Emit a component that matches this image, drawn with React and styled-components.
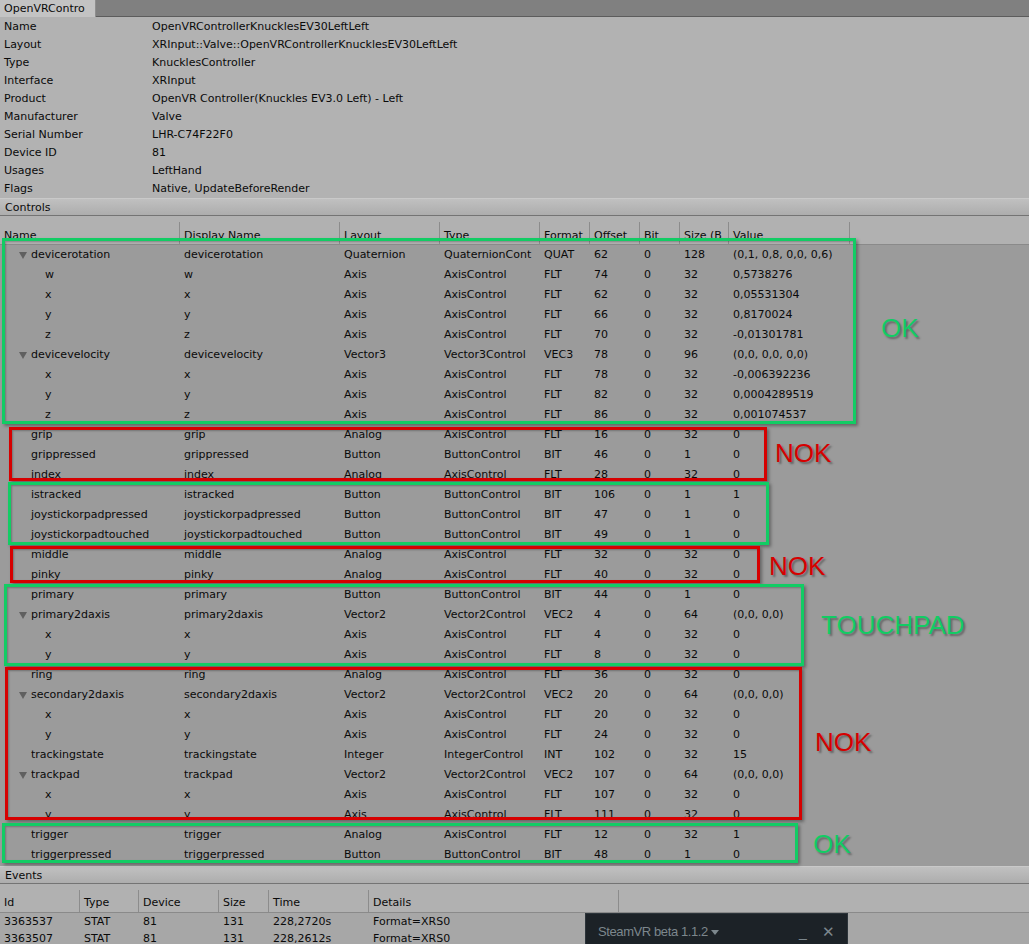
import React from 'react'
import styled, { createGlobalStyle } from 'styled-components'

const Global = createGlobalStyle`
    html, body {
        margin: 0;
        padding: 0;
        background: #9b9b9b;
    }
    body {
        font-family: "DejaVu Sans", Verdana, sans-serif;
        font-size: 11px;
        color: #0a0a0a;
    }
`

const Page = styled.div`
    position: relative;
    width: 1029px;
    height: 944px;
    overflow: hidden;
    background: #9b9b9b;
`

const TabBar = styled.div`
    height: 16px;
    background: #808080;
    border-bottom: 1px solid #5c5c5c;
    display: flex;
`

const Tab = styled.div`
    width: 91px;
    padding-left: 4px;
    background: #c3c3c3;
    border-right: 1px solid #8e8e8e;
    line-height: 18px;
    height: 17px;
    white-space: nowrap;
    overflow: hidden;
`

const Info = styled.div`
    background: #b2b2b2;
    padding-top: 1px;
`

const InfoRow = styled.div`
    display: grid;
    grid-template-columns: 148px 1fr;
    height: 18px;
    line-height: 18px;
    padding-left: 4px;
    white-space: nowrap;
`

const Foldout = styled.div`
    height: 16px;
    line-height: 17px;
    padding-left: 5px;
    background: linear-gradient(#c0c0c0, #adadad);
    border-top: 1px solid #c9c9c9;
    border-bottom: 1px solid #747474;
    margin-top: ${p => p.$gap || 0}px;
`

const Table = styled.div`
    width: ${p => p.$width}px;
`

const HeadRow = styled.div`
    display: grid;
    grid-template-columns: ${p => p.$cols};
    height: ${p => p.$height}px;
    background: #b1b1b1;
    border-bottom: 1px solid #8a8a8a;
    width: 1029px;
`

const HeadCell = styled.div`
    position: relative;
    display: flex;
    align-items: flex-end;
    padding: 0 0 ${p => p.$pad}px 4px;
    white-space: nowrap;
    overflow: hidden;
    &::after {
        content: '';
        position: absolute;
        right: 0;
        top: 6px;
        bottom: 0;
        width: 1px;
        background: #8c8c8c;
    }
`

const Row = styled.div`
    display: grid;
    grid-template-columns: ${p => p.$cols};
    height: ${p => p.$height}px;
    line-height: ${p => p.$height}px;
    background: ${p => p.$bg || 'transparent'};
`

const Cell = styled.div`
    padding-left: 4px;
    white-space: nowrap;
    overflow: hidden;
`

const NameCell = styled.div`
    display: flex;
    align-items: center;
    padding-left: ${p => (p.$child ? 45 : 18)}px;
    white-space: nowrap;
    overflow: hidden;
`

const Toggle = styled.span`
    width: 13px;
    flex: none;
    height: 20px;
    position: relative;
    &::before {
        content: '';
        display: ${p => (p.$open ? 'block' : 'none')};
        position: absolute;
        left: 1px;
        top: 7px;
        border-left: 4px solid transparent;
        border-right: 4px solid transparent;
        border-top: 7px solid #606060;
    }
`

const Mark = styled.div`
    position: absolute;
    left: ${p => p.$x}px;
    top: ${p => p.$y}px;
    width: ${p => p.$w}px;
    height: ${p => p.$h}px;
    border: 3px solid ${p => (p.$ok ? '#12cc64' : '#d60000')};
    box-sizing: border-box;
    box-shadow: 2px 2px 3px rgba(0, 0, 0, 0.35), inset 1px 1px 2px rgba(0, 0, 0, 0.25);
    pointer-events: none;
`

const Label = styled.div`
    position: absolute;
    left: ${p => p.$x}px;
    top: ${p => p.$y}px;
    font-family: "Liberation Sans", Arial, sans-serif;
    font-size: 26px;
    line-height: 26px;
    color: ${p => (p.$ok ? '#12cc64' : '#d60000')};
    text-shadow: 2px 2px 2px rgba(0, 0, 0, 0.35);
`

const Steam = styled.div`
    position: absolute;
    left: 585px;
    top: 913px;
    width: 263px;
    height: 40px;
    box-sizing: border-box;
    background: #1c2227;
    border: 1px solid #2c343a;
    display: flex;
    align-items: flex-start;
    padding: 10px 12px 0 12px;
    font-family: "Liberation Sans", Arial, sans-serif;
    font-size: 13px;
    letter-spacing: -0.4px;
    color: #7c878d;
`

const SteamTitle = styled.span`
    flex: 1;
    display: flex;
    align-items: center;
    gap: 3px;
`

const Caret = styled.span`
    width: 0;
    height: 0;
    border-left: 4px solid transparent;
    border-right: 4px solid transparent;
    border-top: 5px solid #7c878d;
    margin-top: 2px;
`

const WinBtn = styled.span`
    margin-left: 16px;
    font-size: ${p => p.$size || 14}px;
    line-height: 16px;
`

const info = [
    ['Name', 'OpenVRControllerKnucklesEV30LeftLeft'],
    ['Layout', 'XRInput::Valve::OpenVRControllerKnucklesEV30LeftLeft'],
    ['Type', 'KnucklesController'],
    ['Interface', 'XRInput'],
    ['Product', 'OpenVR Controller(Knuckles EV3.0 Left) - Left'],
    ['Manufacturer', 'Valve'],
    ['Serial Number', 'LHR-C74F22F0'],
    ['Device ID', '81'],
    ['Usages', 'LeftHand'],
    ['Flags', 'Native, UpdateBeforeRender'],
]

const ctrlCols = '180px 160px 100px 100px 50px 50px 40px 49px 121px'
const ctrlHead = ['Name', 'Display Name', 'Layout', 'Type', 'Format', 'Offset', 'Bit', 'Size (B', 'Value']

const axis = (n, off, val) => [n, n, 'Axis', 'AxisControl', 'FLT', off, '0', '32', val, 1]
const analog = (n, off, val) => [n, n, 'Analog', 'AxisControl', 'FLT', off, '0', '32', val, 0]
const button = (n, off, val) => [n, n, 'Button', 'ButtonControl', 'BIT', off, '0', '1', val, 0]
const vec2 = (n, off) => [n, n, 'Vector2', 'Vector2Control', 'VEC2', off, '0', '64', '(0,0, 0,0)', 0, true]

const controls = [
    ['devicerotation', 'devicerotation', 'Quaternion', 'QuaternionCont', 'QUAT', '62', '0', '128', '(0,1, 0,8, 0,0, 0,6)', 0, true],
    axis('w', '74', '0,5738276'),
    axis('x', '62', '0,05531304'),
    axis('y', '66', '0,8170024'),
    axis('z', '70', '-0,01301781'),
    ['devicevelocity', 'devicevelocity', 'Vector3', 'Vector3Control', 'VEC3', '78', '0', '96', '(0,0, 0,0, 0,0)', 0, true],
    axis('x', '78', '-0,006392236'),
    axis('y', '82', '0,0004289519'),
    axis('z', '86', '0,001074537'),
    analog('grip', '16', '0'),
    button('grippressed', '46', '0'),
    analog('index', '28', '0'),
    button('istracked', '106', '1'),
    button('joystickorpadpressed', '47', '0'),
    button('joystickorpadtouched', '49', '0'),
    analog('middle', '32', '0'),
    analog('pinky', '40', '0'),
    button('primary', '44', '0'),
    vec2('primary2daxis', '4'),
    axis('x', '4', '0'),
    axis('y', '8', '0'),
    analog('ring', '36', '0'),
    vec2('secondary2daxis', '20'),
    axis('x', '20', '0'),
    axis('y', '24', '0'),
    ['trackingstate', 'trackingstate', 'Integer', 'IntegerControl', 'INT', '102', '0', '32', '15', 0],
    vec2('trackpad', '107'),
    axis('x', '107', '0'),
    axis('y', '111', '0'),
    analog('trigger', '12', '1'),
    button('triggerpressed', '48', '0'),
]

const eventCols = '80px 59px 80px 50px 100px 250px'
const eventHead = ['Id', 'Type', 'Device', 'Size', 'Time', 'Details']
const events = [
    ['3363537', 'STAT', '81', '131', '228,2720s', 'Format=XRS0'],
    ['3363507', 'STAT', '81', '131', '228,2612s', 'Format=XRS0'],
]

// annotation boxes drawn over the table
const marks = [
    { x: 2, y: 238, w: 854, h: 186, ok: true },
    { x: 9, y: 427, w: 758, h: 54 },
    { x: 8, y: 482, w: 761, h: 63, ok: true },
    { x: 10, y: 546, w: 750, h: 37 },
    { x: 4, y: 584, w: 800, h: 82, ok: true },
    { x: 5, y: 667, w: 797, h: 153 },
    { x: 2, y: 823, w: 796, h: 40, ok: true },
]

const labels = [
    { x: 881, y: 315, text: 'OK', ok: true },
    { x: 775, y: 440, text: 'NOK' },
    { x: 769, y: 553, text: 'NOK' },
    { x: 821, y: 612, text: 'TOUCHPAD', ok: true },
    { x: 815, y: 729, text: 'NOK' },
    { x: 813, y: 831, text: 'OK', ok: true },
]

class App extends React.Component {
    render() {
        return (
            <Page>
                <Global />
                <TabBar>
                    <Tab>OpenVRContro</Tab>
                </TabBar>
                <Info>
                    {info.map(([k, v]) => (
                        <InfoRow key={k}>
                            <span>{k}</span>
                            <span>{v}</span>
                        </InfoRow>
                    ))}
                </Info>
                <Foldout>Controls</Foldout>
                <HeadRow $cols={ctrlCols} $height={28}>
                    {ctrlHead.map(h => (
                        <HeadCell key={h} $pad={2}>{h}</HeadCell>
                    ))}
                </HeadRow>
                <Table $width={850}>
                    {controls.map((r, i) => (
                        <Row key={i} $cols={ctrlCols} $height={20}>
                            <NameCell $child={r[9]}>
                                {!r[9] && <Toggle $open={r[10]} />}
                                {r[0]}
                            </NameCell>
                            {r.slice(1, 9).map((c, j) => (
                                <Cell key={j}>{c}</Cell>
                            ))}
                        </Row>
                    ))}
                </Table>
                <Foldout $gap={1}>Events</Foldout>
                <HeadRow $cols={eventCols} $height={28}>
                    {eventHead.map(h => (
                        <HeadCell key={h} $pad={3}>{h}</HeadCell>
                    ))}
                </HeadRow>
                {events.map((r, i) => (
                    <Row key={i} $cols={eventCols} $height={17} $bg="#a7a7a7">
                        {r.map((c, j) => (
                            <Cell key={j}>{c}</Cell>
                        ))}
                    </Row>
                ))}

                {marks.map((m, i) => (
                    <Mark key={i} $x={m.x} $y={m.y} $w={m.w} $h={m.h} $ok={m.ok} />
                ))}
                {labels.map((l, i) => (
                    <Label key={i} $x={l.x} $y={l.y} $ok={l.ok}>{l.text}</Label>
                ))}

                <Steam>
                    <SteamTitle>SteamVR beta 1.1.2<Caret /></SteamTitle>
                    <WinBtn>_</WinBtn>
                    <WinBtn $size={15}>✕</WinBtn>
                </Steam>
            </Page>
        )
    }
}

export default App
